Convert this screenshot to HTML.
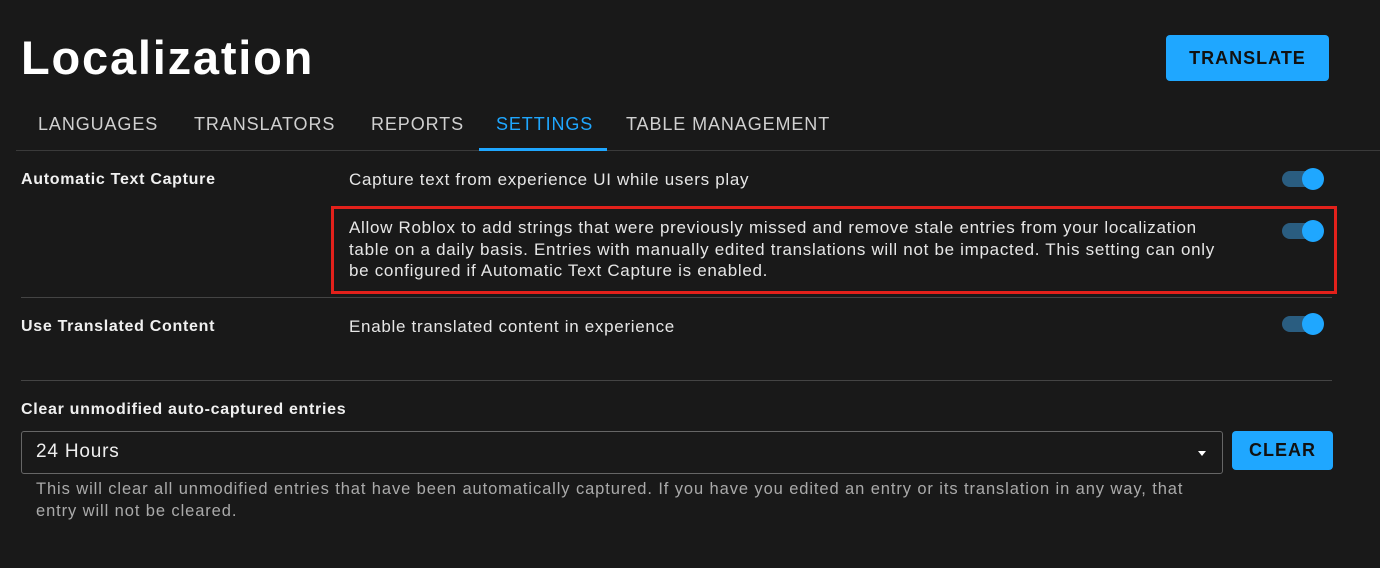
<!DOCTYPE html>
<html><head><meta charset="utf-8"><style>
body{margin:0;width:1380px;height:568px;background:#191919;font-family:"Liberation Sans",sans-serif;color:#e6e6e6;position:relative;overflow:hidden}
.a{position:absolute;white-space:nowrap}
h1{position:absolute;left:21px;top:30px;margin:0;font-size:47px;font-weight:bold;color:#fff;letter-spacing:1.8px}
.btn{position:absolute;background:#1fa7ff;border-radius:4px;color:#111;font-weight:bold;text-align:center;letter-spacing:1px}
.tab{position:absolute;top:114px;font-size:18px;color:#d0d0d0;letter-spacing:0.9px}
.line{position:absolute;height:1px;background:#444}
.lbl{font-weight:bold;font-size:16px;color:#f0f0f0;letter-spacing:0.7px}
.txt{font-size:17px;color:#e6e6e6;letter-spacing:0.7px}
.tg{position:absolute;width:40px;height:16px;border-radius:8px;background:#2a5d80}
.tg::after{content:"";position:absolute;right:-2px;top:-3px;width:22px;height:22px;border-radius:50%;background:#1fa7ff}
</style></head><body>
<h1>Localization</h1>
<div class="btn" style="left:1166px;top:35px;width:163px;height:46px;line-height:46px;font-size:18px">TRANSLATE</div>
<div class="tab" style="left:38px">LANGUAGES</div>
<div class="tab" style="left:194px">TRANSLATORS</div>
<div class="tab" style="left:371px">REPORTS</div>
<div class="tab" style="left:496px;color:#1fa7ff">SETTINGS</div>
<div class="tab" style="left:626px">TABLE MANAGEMENT</div>
<div class="line" style="left:16px;top:150px;width:1364px;background:#3a3a3a"></div>
<div style="position:absolute;left:479px;top:148px;width:128px;height:3px;background:#1fa7ff"></div>

<div class="a lbl" style="left:21px;top:171px">Automatic Text Capture</div>
<div class="a txt" style="left:349px;top:170px">Capture text from experience UI while users play</div>
<div class="tg" style="left:1282px;top:171px"></div>

<div style="position:absolute;left:331px;top:206px;width:1000px;height:82px;border:3px solid #e3211b"></div>
<div class="a txt" style="left:349px;top:217px;line-height:21.5px">Allow Roblox to add strings that were previously missed and remove stale entries from your localization<br>table on a daily basis. Entries with manually edited translations will not be impacted. This setting can only<br>be configured if Automatic Text Capture is enabled.</div>
<div class="tg" style="left:1282px;top:223px"></div>
<div class="line" style="left:21px;top:297px;width:1311px"></div>

<div class="a lbl" style="left:21px;top:318px">Use Translated Content</div>
<div class="a txt" style="left:349px;top:317px">Enable translated content in experience</div>
<div class="tg" style="left:1282px;top:316px"></div>
<div class="line" style="left:21px;top:380px;width:1311px"></div>

<div class="a lbl" style="left:21px;top:401px">Clear unmodified auto-captured entries</div>
<div style="position:absolute;left:21px;top:431px;width:1200px;height:41px;border:1px solid #666;border-radius:3px"></div>
<div class="a" style="left:36px;top:441px;font-size:19px;color:#eee;letter-spacing:0.8px">24 Hours</div>
<div style="position:absolute;left:1198px;top:451px;width:0;height:0;border-left:4px solid transparent;border-right:4px solid transparent;border-top:5px solid #fff"></div>
<div class="btn" style="left:1232px;top:431px;width:101px;height:39px;line-height:39px;font-size:18px">CLEAR</div>
<div class="a" style="left:36px;top:479px;font-size:16.5px;color:#aaa;line-height:21.5px;letter-spacing:0.9px">This will clear all unmodified entries that have been automatically captured. If you have you edited an entry or its translation in any way, that<br>entry will not be cleared.</div>
</body></html>
